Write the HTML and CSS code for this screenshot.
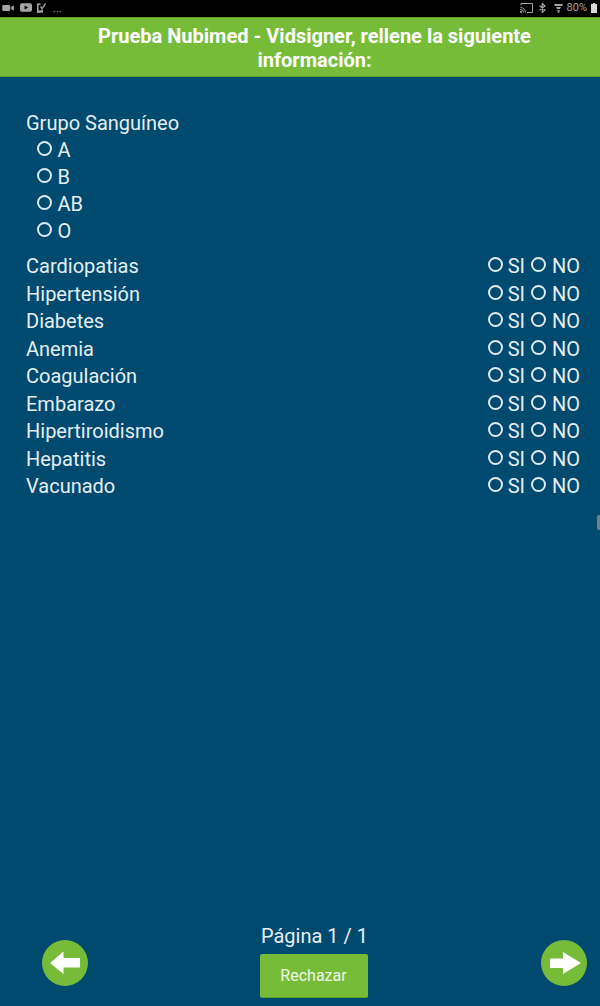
FILE: index.html
```html
<!DOCTYPE html>
<html lang="es">
<head>
<meta charset="utf-8">
<title>Prueba Nubimed</title>
<link rel="stylesheet" href="styles.css">
</head>
<body>
<div class="status">
  <div class="status-left">
    <svg class="si" width="13" height="8" viewBox="0 0 14 9"><rect x="0" y="1" width="9" height="7" rx="1.500"/><path d="M10 3.500 13 1.500V7.500L10 5.500z"/></svg>
    <svg class="si" width="12" height="9" viewBox="0 0 13 9"><path fill-rule="evenodd" d="M2 0H11a2 2 0 0 1 2 2V7a2 2 0 0 1-2 2H2A2 2 0 0 1 0 7V2A2 2 0 0 1 2 0zM5 2.200V6.800L9 4.500z"/></svg>
    <svg class="si" width="9" height="11" viewBox="0 0 9 11"><path d="M0 1.500H3.500V3H1.500V8.500L6 8V10.500L0 11zM3 5 4 4 5 5.500 8 1 9 2 5 8z"/></svg>
    <span class="dots">...</span>
  </div>
  <div class="status-right">
    <svg class="si" width="13" height="10" viewBox="0 0 13 10"><path fill="none" stroke="#a5a5a5" stroke-width="1" d="M1 2.500V.5H12.500V9.500H7M.5 4.500a5 5 0 0 1 5 5M.5 6.500a3 3 0 0 1 3 3"/><circle cx="1" cy="9" r="1"/></svg>
    <svg class="si bt" width="7" height="10" viewBox="0 0 7 10"><path fill="none" stroke="#a5a5a5" stroke-width="1.200" d="M.5 2.700 6 7 3.300 9.300V.7L6 3 .5 7.300"/></svg>
    <svg class="si wf" width="9" height="10" viewBox="0 0 9 10"><path d="M0 1H9L8 3H1zM2 4H7L6 6H3zM3.500 7H5.500V9.500H3.500z"/></svg>
    <span class="pct">80%</span>
    <svg class="si" width="6" height="10" viewBox="0 0 6 10"><path fill="#d8d8d8" d="M2 0H4V1H6V10H0V1H2z"/></svg>
  </div>
</div>
<header class="title">Prueba Nubimed - Vidsigner, rellene la siguiente<br>información:</header>
<main class="form">
  <section class="group">
    <div class="row-label">Grupo Sanguíneo</div>
    <label class="opt"><span class="radio"></span>A</label>
    <label class="opt"><span class="radio"></span>B</label>
    <label class="opt"><span class="radio"></span>AB</label>
    <label class="opt"><span class="radio"></span>O</label>
  </section>
  <section class="list">
    <div class="row"><span>Cardiopatias</span><span class="yn"><span class="radio"></span><span class="si-t">SI</span><span class="radio"></span><span class="no-t">NO</span></span></div>
    <div class="row"><span>Hipertensión</span><span class="yn"><span class="radio"></span><span class="si-t">SI</span><span class="radio"></span><span class="no-t">NO</span></span></div>
    <div class="row"><span>Diabetes</span><span class="yn"><span class="radio"></span><span class="si-t">SI</span><span class="radio"></span><span class="no-t">NO</span></span></div>
    <div class="row"><span>Anemia</span><span class="yn"><span class="radio"></span><span class="si-t">SI</span><span class="radio"></span><span class="no-t">NO</span></span></div>
    <div class="row"><span>Coagulación</span><span class="yn"><span class="radio"></span><span class="si-t">SI</span><span class="radio"></span><span class="no-t">NO</span></span></div>
    <div class="row"><span>Embarazo</span><span class="yn"><span class="radio"></span><span class="si-t">SI</span><span class="radio"></span><span class="no-t">NO</span></span></div>
    <div class="row"><span>Hipertiroidismo</span><span class="yn"><span class="radio"></span><span class="si-t">SI</span><span class="radio"></span><span class="no-t">NO</span></span></div>
    <div class="row"><span>Hepatitis</span><span class="yn"><span class="radio"></span><span class="si-t">SI</span><span class="radio"></span><span class="no-t">NO</span></span></div>
    <div class="row"><span>Vacunado</span><span class="yn"><span class="radio"></span><span class="si-t">SI</span><span class="radio"></span><span class="no-t">NO</span></span></div>
  </section>
</main>
<footer class="foot">
  <button class="arrow" aria-label="Anterior"><svg width="46" height="46" viewBox="0 0 46 46"><path fill="#fff" d="M8 23 21.500 11.500V18H38V27.500H21.500V34z"/></svg></button>
  <div class="center">
    <div class="page">Página 1 / 1</div>
    <button class="reject">Rechazar</button>
  </div>
  <button class="arrow" aria-label="Siguiente"><svg width="46" height="46" viewBox="0 0 46 46"><path fill="#fff" d="M40 23 22 12V18.500H9V28H22V34z"/></svg></button>
</footer>
<div class="handle"></div>
</body>
</html>
```

FILE: styles.css
```css
* { box-sizing: border-box; }
html, body { margin: 0; padding: 0; }
body {
  width: 600px;
  height: 1006px;
  overflow: hidden;
  display: flex;
  flex-direction: column;
  background: #004a70;
  color: #e6eef2;
  font-family: Roboto, "Liberation Sans", sans-serif;
  position: relative;
}
.status {
  height: 17px;
  background: #000;
  display: flex;
  justify-content: space-between;
  align-items: center;
  padding: 0 3px 2px 2px;
  color: #a5a5a5;
}
.status-left, .status-right { display: flex; align-items: center; }
.status-left { gap: 5px; }
.status-right { gap: 6px; }
.si { fill: #a5a5a5; display: block; }
.dots { font-size: 11px; line-height: 10px; margin-left: 2px; padding-top: 2px; }
.pct { font-size: 11px; line-height: 12px; margin-left: -2px; margin-right: -2px; }
.wf { margin-left: 2px; }
.title {
  height: 60px;
  background: #76bc39;
  border-top: 1px solid #5ea12a;
  border-bottom: 1px solid #5ea12a;
  color: #fff;
  font-weight: 700;
  font-size: 20px;
  line-height: 24px;
  text-align: center;
  padding: 6px 0 0 29px;
}
.form { flex: 1; padding: 33px 20px 0 26px; font-size: 20px; }
.group { margin-bottom: 8px; }
.row-label { height: 27px; line-height: 27px; }
.opt {
  height: 26.900px;
  display: flex;
  align-items: center;
  padding-left: 11px;
}
.radio {
  width: 15px;
  height: 15px;
  border: 2px solid #dfeaef;
  border-radius: 50%;
  flex: none;
  margin-right: 6px;
  position: relative;
  top: -2px;
}
.opt .radio { margin-right: 5.500px; }
.row {
  height: 27.500px;
  display: flex;
  justify-content: space-between;
  align-items: center;
}
.yn { display: flex; align-items: center; }
.yn .radio { top: -1.500px; }
.si-t { margin-right: 6px; margin-left: -1px; }
.foot {
  height: 77px;
  display: flex;
  justify-content: space-between;
  align-items: flex-start;
  padding: 0 13px 0 42px;
  margin-bottom: 7px;
}
.arrow {
  width: 46px;
  height: 46px;
  margin-top: 18px;
  padding: 0;
  border: none;
  border-radius: 50%;
  background: #76bc39;
  display: block;
}
.arrow svg { display: block; }
.center { display: flex; flex-direction: column; align-items: center; margin-left: -2px; }
.page { font-size: 20px; line-height: 26px; margin-top: 1px; margin-bottom: 5px; padding-left: 2px; }
.reject {
  width: 108px;
  height: 44px;
  border: none;
  border-bottom: 1px solid #5ea12a;
  border-radius: 2px;
  background: #76bc39;
  color: #eef6e6;
  font-family: inherit;
  font-size: 16px;
  padding: 0;
}
.handle {
  position: absolute;
  right: 0;
  top: 515px;
  width: 3px;
  height: 15px;
  background: #6b7f8c;
  border-radius: 2px 0 0 2px;
}
```
